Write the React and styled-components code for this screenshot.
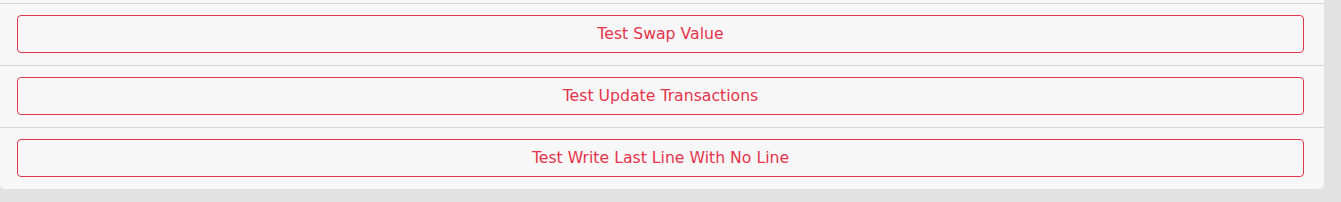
import React from "react";
import styled, { createGlobalStyle } from "styled-components";

const Global = createGlobalStyle`
  html, body { margin: 0; padding: 0; background: #e2e2e2; }
  body { font-family: "DejaVu Sans", "Liberation Sans", sans-serif; }
`;

const Card = styled.div`
  width: 1324px;
  background: #f7f7f7;
  border-radius: 0 0 5px 5px;
  padding-top: 3px;
`;

const Row = styled.div`
  border-top: 1px solid #d5d5d5;
  padding: 11px 20px 12px 17px;
  display: flex;
`;

const TestButton = styled.button`
  flex: 1;
  height: 38px;
  box-sizing: border-box;
  padding: 0 0 1px;
  background: transparent;
  border: 1px solid #e0384b;
  border-radius: 4px;
  color: #e4344c;
  font-family: "DejaVu Sans", "Liberation Sans", sans-serif;
  font-size: 15.7px;
  font-weight: 400;
  line-height: 20px;
  cursor: pointer;
`;

const tests = ["Test Swap Value", "Test Update Transactions", "Test Write Last Line With No Line"];

export default function App() {
  return (
    <>
      <Global />
      <Card>
        {tests.map((t) => (
          <Row key={t}>
            <TestButton>{t}</TestButton>
          </Row>
        ))}
      </Card>
    </>
  );
}
